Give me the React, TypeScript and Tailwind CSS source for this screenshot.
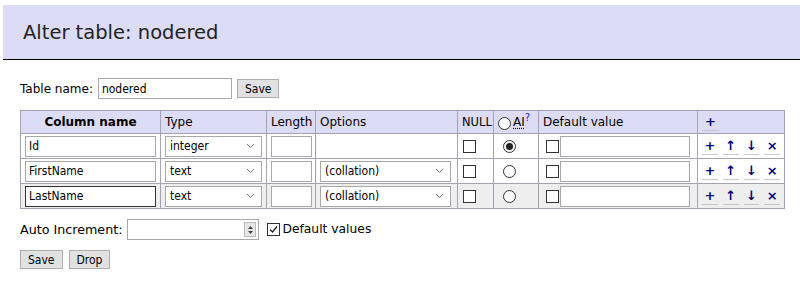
import type { ReactNode } from 'react';

const font = "font-['DejaVu_Sans',Verdana,sans-serif]";
const ctl = "font-['DejaVu_Sans_Condensed','DejaVu_Sans',sans-serif] text-[12px]";

const TextBox = ({ value = '', w, focus }: { value?: string; w: string; focus?: boolean }) => (
  <div
    className={`${w} h-[21px] bg-white border ${focus ? 'border-[#333]' : 'border-[#a8a8a8]'} px-[3px] flex items-center ${ctl} text-black`}
  >
    {value}
  </div>
);

const Select = ({ value, w }: { value: string; w: string }) => (
  <div className={`${w} h-[21px] bg-white border border-[#a8a8a8] pl-[4px] pr-[6px] flex items-center justify-between ${ctl} text-black`}>
    <span>{value}</span>
    <svg width="9" height="6" viewBox="0 0 9 6">
      <path d="M1 1l3.5 3.5L8 1" fill="none" stroke="#777" strokeWidth="1" />
    </svg>
  </div>
);

const Check = ({ checked }: { checked?: boolean }) => (
  <span className="inline-flex shrink-0 w-[13px] h-[13px] border border-[#333] bg-white items-center justify-center">
    {checked && (
      <svg width="11" height="11" viewBox="0 0 11 11">
        <path d="M2 5.5l2.5 2.5L9 2.5" fill="none" stroke="#222" strokeWidth="1.3" />
      </svg>
    )}
  </span>
);

const Radio = ({ checked }: { checked?: boolean }) => (
  <span className="inline-flex shrink-0 w-[13px] h-[13px] rounded-full border border-[#333] bg-white items-center justify-center">
    {checked && <span className="w-[7px] h-[7px] rounded-full bg-[#222]" />}
  </span>
);

const Btn = ({ children }: { children: ReactNode }) => (
  <button className={`h-[19px] px-[7px] bg-[#e1e1e1] border border-[#adadad] ${ctl} text-black leading-none`}>{children}</button>
);

const Icon = ({ children }: { children: ReactNode }) => (
  <span className="inline-flex w-[17px] h-[17px] items-center justify-center border-b border-[#c8c8c8] text-[#00007f] font-bold text-[13px] leading-none">
    {children}
  </span>
);

const Actions = () => (
  <div className="flex gap-[5px] items-center">
    <Icon>+</Icon>
    <Icon>↑</Icon>
    <Icon>↓</Icon>
    <Icon>×</Icon>
  </div>
);

const cell = 'border border-[#a3a3b8] px-[4px] align-middle';
const td = `${cell} h-[25px] py-0`;
const th = `${cell} h-[23px] py-0 leading-[14px]`;

const rows = [
  { name: 'Id', type: 'integer', coll: false, ai: true, gray: false, focus: false },
  { name: 'FirstName', type: 'text', coll: true, ai: false, gray: false, focus: false },
  { name: 'LastName', type: 'text', coll: true, ai: false, gray: true, focus: true },
];

export default function App() {
  return (
    <div className={`w-[800px] h-[281px] bg-white text-[12px] text-black ${font}`}>
      <div className="pt-[5px] pl-[3px]">
        <h2 className="h-[55px] bg-[#dcdcf7] border-b border-black pl-[20px] flex items-center text-[19.5px] text-[#222] pt-[2px]">
          Alter table: nodered
        </h2>
      </div>

      <div className="pl-[20px]">
        <div className="flex items-center gap-[5px] mt-[18px]">
          <span>Table name:</span>
          <TextBox value="nodered" w="w-[134px]" />
          <Btn>Save</Btn>
        </div>

        <table className="mt-[11px] border-collapse border border-[#a3a3b8] w-[765px] table-fixed">
          <colgroup>
            <col className="w-[140px]" />
            <col className="w-[106px]" />
            <col className="w-[49px]" />
            <col className="w-[142px]" />
            <col className="w-[36px]" />
            <col className="w-[45px]" />
            <col className="w-[159px]" />
            <col />
          </colgroup>
          <thead>
            <tr className="bg-[#dcdcf7] h-[23px]">
              <th className={`${th} text-center font-bold`}>Column name</th>
              <th className={`${th} text-left font-normal`}>Type</th>
              <th className={`${th} text-left font-normal px-[2px]`}>Length</th>
              <th className={`${th} text-left font-normal`}>Options</th>
              <th className={`${th} text-left font-normal px-[3px] text-[11.5px]`}>NULL</th>
              <th className={`${th} text-left font-normal px-[3px]`}>
                <div className="flex items-center h-[21px]">
                  <span className="mt-[5px] mr-[2px]">
                    <Radio />
                  </span>
                  <span className="underline decoration-dotted underline-offset-2">AI</span>
                  <span className="text-[#2222ee] text-[10px] leading-none self-start mt-[1px]">?</span>
                </div>
              </th>
              <th className={`${th} text-left font-normal`}>Default value</th>
              <th className={`${th} text-left font-normal`}>
                <div className="flex h-[21px] items-center">
                  <Icon>+</Icon>
                </div>
              </th>
            </tr>
          </thead>
          <tbody>
            {rows.map((r) => (
              <tr key={r.name} className={r.gray ? 'bg-[#eeeeee]' : 'bg-white'}>
                <td className={td}>
                  <TextBox value={r.name} w="w-[131px]" focus={r.focus} />
                </td>
                <td className={td}>
                  <Select value={r.type} w="w-[97px]" />
                </td>
                <td className={td}>
                  <TextBox w="w-[41px]" />
                </td>
                <td className={td}>{r.coll && <Select value="(collation)" w="w-[131px]" />}</td>
                <td className={td}>
                  <div className="flex pl-[1px]">
                    <Check />
                  </div>
                </td>
                <td className={td}>
                  <div className="flex pl-[5px]">
                    <Radio checked={r.ai} />
                  </div>
                </td>
                <td className={td}>
                  <div className="flex items-center gap-[1px] pl-[3px]">
                    <Check />
                    <TextBox w="w-[130px]" />
                  </div>
                </td>
                <td className={td}>
                  <Actions />
                </td>
              </tr>
            ))}
          </tbody>
        </table>

        <div className="flex items-center mt-[10px]">
          <span className="text-[12.7px]">Auto Increment:</span>
          <div className="ml-[5px] w-[132px] h-[21px] bg-white border border-[#a8a8a8] flex justify-end items-center pr-[2px]">
            <div className="w-[12px] h-[15px] bg-[#e6e6e6] border border-[#bbb] flex flex-col items-center justify-center gap-[2px]">
              <svg width="5" height="3" viewBox="0 0 5 3">
                <path d="M0 3L2.5 0L5 3z" fill="#444" />
              </svg>
              <svg width="5" height="3" viewBox="0 0 5 3">
                <path d="M0 0L2.5 3L5 0z" fill="#444" />
              </svg>
            </div>
          </div>
          <label className="flex items-center ml-[8px] gap-[2px] text-[12.3px]">
            <Check checked />
            <span>Default values</span>
          </label>
        </div>

        <div className="flex gap-[6px] mt-[10px]">
          <Btn>Save</Btn>
          <Btn>Drop</Btn>
        </div>
      </div>
    </div>
  );
}
